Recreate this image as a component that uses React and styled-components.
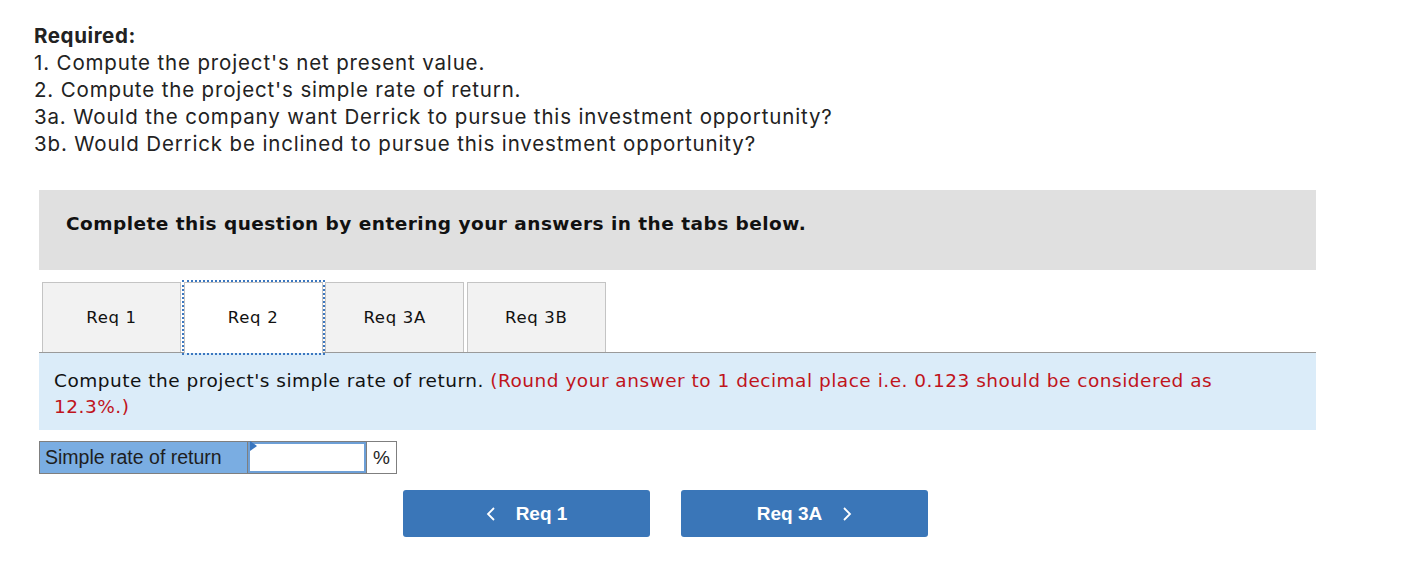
import React from "react";
import styled, { createGlobalStyle, css } from "styled-components";

const GlobalStyle = createGlobalStyle`
  body {
    margin: 0;
    background: #ffffff;
  }
`;

const Page = styled.div`
  padding-top: 22px;
  padding-bottom: 38px;
`;

const Required = styled.div`
  padding-left: 34px;
  font-family: "Inter", "Open Sans", sans-serif;
  font-size: 20.5px;
  line-height: 27px;
  letter-spacing: 0.85px;
  color: #222222;
  .title {
    font-weight: 700;
    letter-spacing: 0.6px;
  }
`;

const Section = styled.div`
  margin-left: 39px;
  width: 1277px;
`;

const InstructionBox = styled.div`
  margin-top: 33px;
  height: 80px;
  box-sizing: border-box;
  padding: 23px 27px;
  background-color: #e0e0e0;
  font-family: "DejaVu Sans", Verdana, sans-serif;
  font-weight: 700;
  font-size: 18.5px;
  line-height: 22px;
  letter-spacing: 0.47px;
  color: #111111;
`;

const TabBar = styled.div`
  display: flex;
  margin-top: 12px;
  padding-left: 3px;
  border-bottom: 1px solid #9a9a9a;
`;

const Tab = styled.div`
  width: 139px;
  height: 70px;
  box-sizing: border-box;
  margin-right: 2.6px;
  display: flex;
  align-items: center;
  justify-content: center;
  background-color: #f2f2f2;
  border: 1px solid #c4c4c4;
  border-bottom: none;
  font-family: "DejaVu Sans", Verdana, sans-serif;
  font-size: 16.5px;
  letter-spacing: 0.7px;
  color: #111111;
  position: relative;
  ${(props) =>
    props.active &&
    css`
      background-color: #ffffff;
      outline: 2px dotted #3a76bf;
      outline-offset: 0px;
      z-index: 1;
      height: 71px;
      padding-bottom: 1px;
      margin-bottom: -1px;
    `}
`;

const Prompt = styled.div`
  padding: 15px 30px 10px 15px;
  background-color: #dbecf9;
  font-family: "DejaVu Sans", Verdana, sans-serif;
  font-size: 18.5px;
  line-height: 26px;
  letter-spacing: 0.5px;
  color: #111111;
  .note {
    color: #c0141c;
  }
`;

const AnswerRow = styled.div`
  display: flex;
  margin-top: 11px;
  height: 33px;
`;

const LabelCell = styled.div`
  width: 209px;
  box-sizing: border-box;
  display: flex;
  align-items: center;
  padding-left: 5px;
  background-color: #7aade2;
  border: 1px solid #7f7f7f;
  font-family: "Liberation Sans", Arial, sans-serif;
  font-size: 19.5px;
  color: #1e1e1e;
`;

const InputCell = styled.div`
  width: 118px;
  box-sizing: border-box;
  position: relative;
  border-top: 1px solid #7f7f7f;
  border-bottom: 1px solid #7f7f7f;
  background: #ffffff;
  input {
    width: 100%;
    height: 100%;
    box-sizing: border-box;
    border: 2px solid #6d9fd6;
    outline: none;
    margin: 0;
    padding: 0 4px;
    font-size: 16px;
  }
`;

const Marker = styled.span`
  position: absolute;
  left: 2px;
  top: 2px;
  width: 0;
  height: 0;
  border-top: 5px solid transparent;
  border-bottom: 5px solid transparent;
  border-left: 7px solid #3a76bf;
  transform: translateY(-3px);
`;

const UnitCell = styled.div`
  width: 31px;
  box-sizing: border-box;
  display: flex;
  align-items: center;
  justify-content: center;
  border: 1px solid #7f7f7f;
  font-family: "Liberation Sans", Arial, sans-serif;
  font-size: 19px;
  color: #1e1e1e;
`;

const NavRow = styled.div`
  display: flex;
  gap: 31px;
  margin-top: 16px;
  margin-left: 403px;
`;

const NavButton = styled.button`
  width: 247px;
  height: 47px;
  border: none;
  border-radius: 3px;
  background-color: #3a76b8;
  color: #ffffff;
  display: flex;
  align-items: center;
  justify-content: center;
  gap: 20px;
  font-family: "Liberation Sans", Arial, sans-serif;
  font-weight: 700;
  font-size: 19px;
  cursor: pointer;
  padding: 0;
  svg {
    display: block;
  }
`;

const Chevron = ({ dir }) => (
  <svg width="10" height="16" viewBox="0 0 10 16">
    <polyline
      points={dir === "left" ? "8,2 2,8 8,14" : "2,2 8,8 2,14"}
      fill="none"
      stroke="#ffffff"
      strokeWidth="1.8"
    />
  </svg>
);

const tabs = ["Req 1", "Req 2", "Req 3A", "Req 3B"];

function App() {
  return (
    <Page>
      <GlobalStyle />
      <Required>
        <div className="title">Required:</div>
        <div>1. Compute the project's net present value.</div>
        <div>2. Compute the project's simple rate of return.</div>
        <div>3a. Would the company want Derrick to pursue this investment opportunity?</div>
        <div>3b. Would Derrick be inclined to pursue this investment opportunity?</div>
      </Required>
      <Section>
        <InstructionBox>
          Complete this question by entering your answers in the tabs below.
        </InstructionBox>
        <TabBar>
          {tabs.map((t) => (
            <Tab key={t} active={t === "Req 2"}>
              {t}
            </Tab>
          ))}
        </TabBar>
        <Prompt>
          Compute the project's simple rate of return.{" "}
          <span className="note">
            (Round your answer to 1 decimal place i.e. 0.123 should be considered as 12.3%.)
          </span>
        </Prompt>
        <AnswerRow>
          <LabelCell>Simple rate of return</LabelCell>
          <InputCell>
            <input type="text" aria-label="Simple rate of return" />
            <Marker />
          </InputCell>
          <UnitCell>%</UnitCell>
        </AnswerRow>
      </Section>
      <NavRow>
        <NavButton>
          <Chevron dir="left" />
          <span>Req 1</span>
        </NavButton>
        <NavButton>
          <span>Req 3A</span>
          <Chevron dir="right" />
        </NavButton>
      </NavRow>
    </Page>
  );
}

export default App;
